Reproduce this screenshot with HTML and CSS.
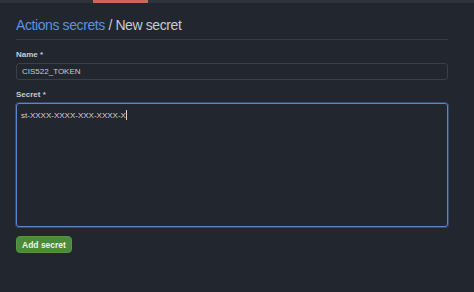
FILE: index.html
```html
<!DOCTYPE html>
<html lang="en">
<head>
  <meta charset="UTF-8" />
  <title>New secret</title>
  <link rel="stylesheet" href="styles.css">
</head>
<body>
  <div class="topbar"><span class="tab-active"></span></div>
  <div class="page">
    <h1 class="title"><a href="#">Actions secrets</a> / New secret</h1>
    <form class="secret-form">
      <div class="form-group">
        <label for="name">Name *</label>
        <input type="text" id="name" value="CIS522_TOKEN" />
      </div>
      <div class="form-group">
        <label for="secret">Secret *</label>
        <div class="textarea">st-XXXX-XXXX-XXX-XXXX-X<span class="caret"></span></div>
      </div>
      <button type="button" class="btn-primary">Add secret</button>
    </form>
  </div>
</body>
</html>
```

FILE: styles.css
```css
* {
  box-sizing: border-box;
}

body {
  margin: 0;
  background-color: #22262e;
  font-family: "Liberation Sans", Arial, sans-serif;
  color: #c6ccd4;
  height: 292px;
  overflow: hidden;
}

.topbar {
  height: 3px;
  background: #2d323b;
}

.tab-active {
  display: block;
  margin-left: 93px;
  width: 55px;
  height: 3px;
  background: #c9695a;
}

.page {
  padding: 0 26px 0 16px;
}

.title {
  margin: 0;
  padding: 14px 0 5px;
  font-size: 14px;
  line-height: 17px;
  letter-spacing: -0.4px;
  font-weight: normal;
  color: #c6ccd4;
  border-bottom: 1px solid #363b45;
}

.title a {
  color: #5a93e0;
  text-decoration: none;
}

.form-group {
  margin-top: 10px;
}

label {
  display: block;
  font-size: 8px;
  line-height: 10px;
  font-weight: bold;
  margin-bottom: 3px;
  color: #c6ccd4;
}

input {
  display: block;
  width: 100%;
  height: 17px;
  padding: 0 5px;
  background: #22262e;
  border: 1px solid #3a3f48;
  border-radius: 3px;
  color: #c6ccd4;
  font-family: inherit;
  font-size: 8px;
}

.textarea {
  height: 124px;
  padding: 6px 4px;
  border: 1px solid #5a86d0;
  border-radius: 3px;
  box-shadow: 0 0 0 1px #34496d;
  font-size: 8px;
  line-height: 10px;
  color: #d0d5dc;
}

.caret {
  display: inline-block;
  width: 1px;
  height: 10px;
  background: #d0d5dc;
  vertical-align: -2px;
}

.btn-primary {
  display: block;
  margin-top: 9px;
  padding: 0 5px;
  height: 17px;
  background-color: #4a8a3c;
  color: #eef3ec;
  border: 1px solid #559545;
  border-radius: 4px;
  font-family: inherit;
  font-size: 8.5px;
  font-weight: bold;
}
```
